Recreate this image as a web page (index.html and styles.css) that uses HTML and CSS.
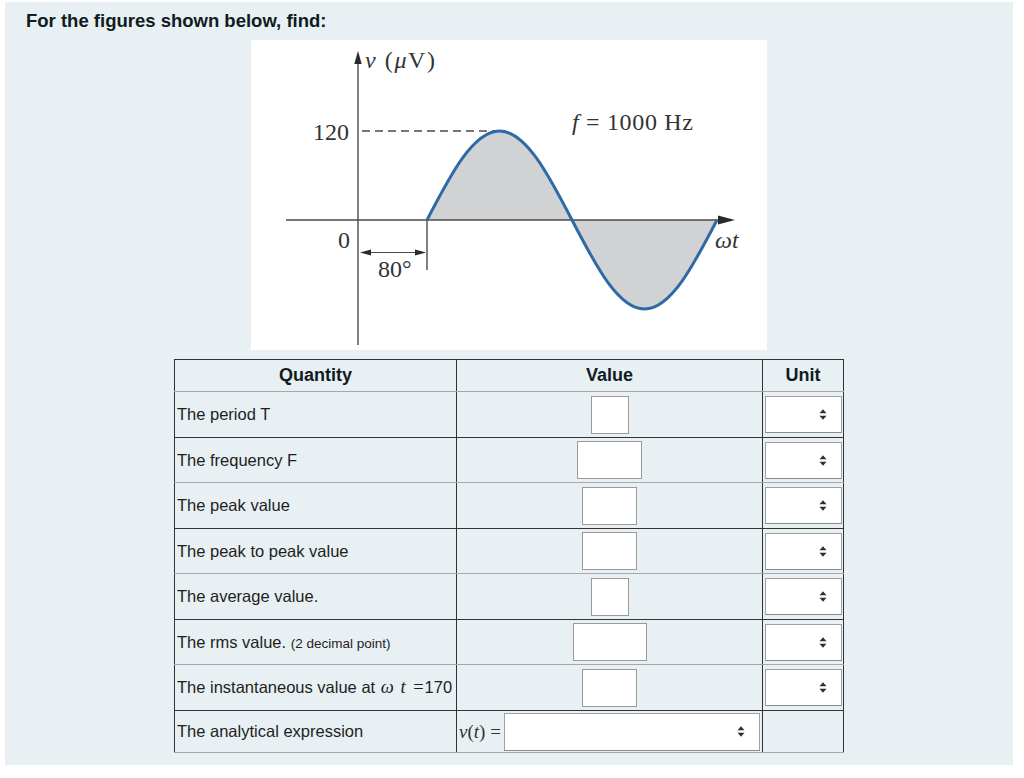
FILE: index.html
```html
<!DOCTYPE html>
<html lang="en">
<head>
<meta charset="utf-8">
<title>Sine wave questions</title>
<link rel="stylesheet" href="styles.css">
</head>
<body>
<div class="card">
  <h1 class="title">For the figures shown below, find:</h1>
  <div class="figure">
    <svg width="516" height="310" viewBox="0 0 516 310">
      <path class="area" d="M176,180 C199.64,134.41 222.26,91 248.5,91 C274.74,91 297.36,134.41 321,180 C344.64,225.59 367.26,269 393.5,269 C419.74,269 442.36,225.59 466,180 Z"/>
      <line class="axis" x1="35" y1="180" x2="470" y2="180"/>
      <polygon class="head" points="484,180 467,175.5 467,184.5"/>
      <line class="axis" x1="107" y1="22" x2="107" y2="305"/>
      <polygon class="head" points="107,11 103.3,24 110.7,24"/>
      <line class="dash" x1="111" y1="91" x2="248" y2="91"/>
      <line class="axis" x1="176" y1="180" x2="176" y2="230"/>
      <line class="thin" x1="115" y1="212.5" x2="170" y2="212.5"/>
      <polygon class="head" points="109,212.5 120,209.5 120,215.5"/>
      <polygon class="head" points="175,212.5 164,209.5 164,215.5"/>
      <path class="curve" d="M176,180 C199.64,134.41 222.26,91 248.5,91 C274.74,91 297.36,134.41 321,180 C344.64,225.59 367.26,269 393.5,269 C419.74,269 442.36,225.59 466,180"/>
      <text class="lbl" x="114" y="28" textLength="70" lengthAdjust="spacing"><tspan class="it">v</tspan> (<tspan class="it">μ</tspan>V)</text>
      <text class="lbl" x="62" y="100">120</text>
      <text class="lbl" x="87" y="208">0</text>
      <text class="lbl" x="127" y="237">80°</text>
      <text class="lbl" x="321" y="90" textLength="121" lengthAdjust="spacing"><tspan class="it">f</tspan> = 1000 Hz</text>
      <text class="lbl it" x="464" y="208">ωt</text>
    </svg>
  </div>
  <table class="qtable">
    <colgroup><col class="c1"><col class="c2"><col class="c3"></colgroup>
    <thead>
      <tr><th>Quantity</th><th>Value</th><th>Unit</th></tr>
    </thead>
    <tbody>
      <tr>
        <td class="q">The period T</td>
        <td class="v"><span class="inp w38"></span></td>
        <td class="u"><span class="sel"><svg class="arr" width="8" height="11" viewBox="0 0 8 11"><path d="M0.5,4.2 L4,0.2 L7.5,4.2 Z M0.5,6.8 L4,10.8 L7.5,6.8 Z"/></svg></span></td>
      </tr>
      <tr>
        <td class="q">The frequency F</td>
        <td class="v"><span class="inp w65"></span></td>
        <td class="u"><span class="sel"><svg class="arr" width="8" height="11" viewBox="0 0 8 11"><path d="M0.5,4.2 L4,0.2 L7.5,4.2 Z M0.5,6.8 L4,10.8 L7.5,6.8 Z"/></svg></span></td>
      </tr>
      <tr>
        <td class="q">The peak value</td>
        <td class="v"><span class="inp w55"></span></td>
        <td class="u"><span class="sel"><svg class="arr" width="8" height="11" viewBox="0 0 8 11"><path d="M0.5,4.2 L4,0.2 L7.5,4.2 Z M0.5,6.8 L4,10.8 L7.5,6.8 Z"/></svg></span></td>
      </tr>
      <tr>
        <td class="q">The peak to peak value</td>
        <td class="v"><span class="inp w55"></span></td>
        <td class="u"><span class="sel"><svg class="arr" width="8" height="11" viewBox="0 0 8 11"><path d="M0.5,4.2 L4,0.2 L7.5,4.2 Z M0.5,6.8 L4,10.8 L7.5,6.8 Z"/></svg></span></td>
      </tr>
      <tr>
        <td class="q">The average value.</td>
        <td class="v"><span class="inp w38"></span></td>
        <td class="u"><span class="sel"><svg class="arr" width="8" height="11" viewBox="0 0 8 11"><path d="M0.5,4.2 L4,0.2 L7.5,4.2 Z M0.5,6.8 L4,10.8 L7.5,6.8 Z"/></svg></span></td>
      </tr>
      <tr>
        <td class="q">The rms value. <span class="small">(2 decimal point)</span></td>
        <td class="v"><span class="inp w74"></span></td>
        <td class="u"><span class="sel"><svg class="arr" width="8" height="11" viewBox="0 0 8 11"><path d="M0.5,4.2 L4,0.2 L7.5,4.2 Z M0.5,6.8 L4,10.8 L7.5,6.8 Z"/></svg></span></td>
      </tr>
      <tr>
        <td class="q">The instantaneous value at <span class="math">ω</span> <span class="math">t</span> <span class="eq sp">=</span>170</td>
        <td class="v"><span class="inp w55"></span></td>
        <td class="u"><span class="sel"><svg class="arr" width="8" height="11" viewBox="0 0 8 11"><path d="M0.5,4.2 L4,0.2 L7.5,4.2 Z M0.5,6.8 L4,10.8 L7.5,6.8 Z"/></svg></span></td>
      </tr>
      <tr>
        <td class="q">The analytical expression</td>
        <td class="expr">
          <div class="expr-row">
            <span class="vt"><span class="math">v</span>(<span class="math">t</span>) <span class="eq">=</span></span>
            <span class="sel wide"><svg class="arr" width="8" height="11" viewBox="0 0 8 11"><path d="M0.5,4.2 L4,0.2 L7.5,4.2 Z M0.5,6.8 L4,10.8 L7.5,6.8 Z"/></svg></span>
          </div>
        </td>
        <td class="u empty"></td>
      </tr>
    </tbody>
  </table>
</div>
</body>
</html>
```

FILE: styles.css
```css
* { box-sizing: border-box; }
html, body { margin: 0; background: #ffffff; }
body {
  font-family: "Liberation Sans", Arial, Helvetica, sans-serif;
  color: #1d1d1d;
}
.card {
  width: 1008px;
  height: 763px;
  margin: 2px 0 0 5px;
  background: #e8f0f3;
  display: flex;
  flex-direction: column;
  align-items: center;
}
.title {
  align-self: stretch;
  margin: 0;
  padding: 8px 21px 0;
  font-size: 18.5px;
  line-height: 22px;
  font-weight: 700;
  color: #0f1c21;
}
.figure {
  margin-top: 8px;
  width: 516px;
  height: 310px;
  background: #ffffff;
}
.figure svg { display: block; }
.area { fill: #d1d2d4; stroke: none; }
.axis { stroke: #4a4a4a; stroke-width: 1.4; }
.thin { stroke: #4a4a4a; stroke-width: 1.2; }
.dash { stroke: #4a4a4a; stroke-width: 1.3; stroke-dasharray: 8 5; }
.head { fill: #2a2a2a; }
.curve { fill: none; stroke: #2f69a6; stroke-width: 3; stroke-linejoin: round; }
.lbl {
  font-family: "Liberation Serif", "Times New Roman", serif;
  font-size: 24px;
  fill: #333333;
}
.it { font-style: italic; }

.qtable {
  margin-top: 9px;
  width: 669px;
  border-collapse: collapse;
  table-layout: fixed;
  border: 1px solid #333333;
}
.c1 { width: 282px; }
.c2 { width: 306px; }
.c3 { width: 81px; }
.qtable th {
  height: 32px;
  padding: 0;
  font-size: 18px;
  font-weight: 700;
  color: #111b1f;
  text-align: center;
  vertical-align: middle;
  border-left: 1px solid #333333;
  border-right: 1px solid #333333;
  border-bottom: 1px solid #a8a8a8;
}
.qtable td {
  padding: 0 2px;
  font-size: 16.5px;
  vertical-align: middle;
  white-space: nowrap;
  border-left: 1px solid #333333;
  border-right: 1px solid #333333;
}
.qtable tbody tr { height: 46px; }
.qtable tbody tr:nth-child(odd) td { border-bottom: 1px solid #333333; }
.qtable tbody tr:nth-child(even) td { border-bottom: 1px solid #a8a8a8; }
.qtable tbody tr:nth-child(even) { height: 45px; }
.qtable tbody tr:last-child { height: 42px; }
.q { color: #1e1e1e; }
.small { font-size: 13.5px; }
.math {
  font-family: "Liberation Serif", "Times New Roman", serif;
  font-style: italic;
  font-size: 18.5px;
  margin: 0 1px;
}
.eq {
  font-family: "Liberation Serif", "Times New Roman", serif;
  font-size: 18.5px;
}
.eq.sp { margin-left: 2px; margin-right: 1px; }
.v { text-align: center; }
.inp {
  display: inline-block;
  vertical-align: middle;
  height: 38px;
  background: #ffffff;
  border: 1px solid #9a9a9a;
}
.w38 { width: 38px; }
.w55 { width: 55px; }
.w65 { width: 65px; }
.w74 { width: 74px; }
.u { text-align: center; }
.qtable td.u { padding: 0 1px; }
.sel {
  display: inline-flex;
  align-items: center;
  justify-content: flex-end;
  vertical-align: middle;
  width: 77px;
  height: 37px;
  padding-right: 14px;
  background: #ffffff;
  border: 1px solid #a0a0a0;
  border-bottom-color: #8a8a8a;
}
.arr { display: block; }
.arr path { fill: #303030; }
.expr-row {
  display: flex;
  align-items: center;
  gap: 3px;
}
.vt {
  font-family: "Liberation Serif", "Times New Roman", serif;
  font-size: 19px;
  color: #333333;
  white-space: nowrap;
}
.vt .math, .vt .eq { font-size: 19px; margin: 0; }
.sel.wide { width: 256px; height: 38px; }
```
